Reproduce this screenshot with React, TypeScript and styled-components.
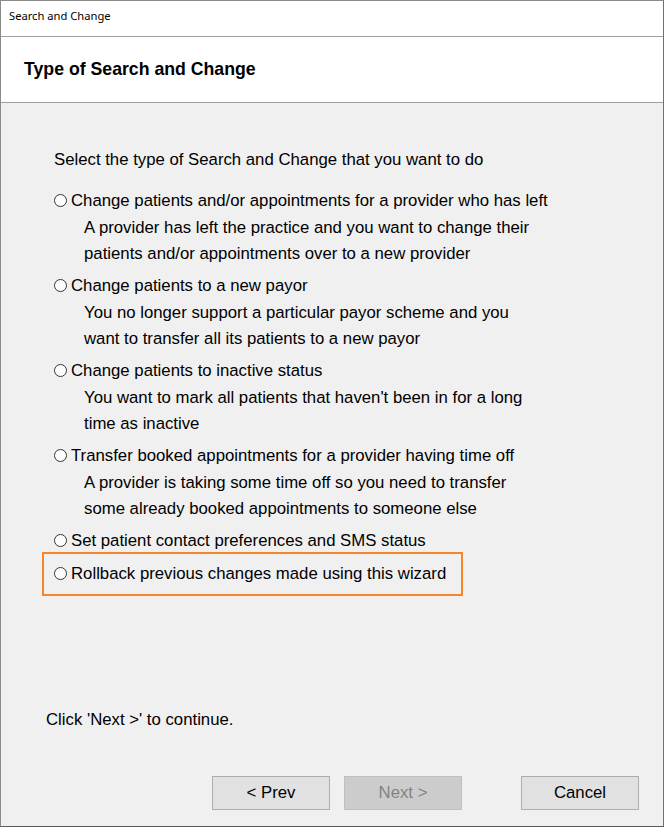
import React from "react";
import styled, { createGlobalStyle } from "styled-components";

const Global = createGlobalStyle`
  html, body { margin: 0; padding: 0; background: #ffffff; }
  * { box-sizing: border-box; }
`;

const Window = styled.div`
  width: 664px;
  height: 827px;
  display: flex;
  flex-direction: column;
  border: 1px solid #8a8a8a;
  border-right-color: #707070;
  border-bottom-color: #5a5a5a;
  background: #f0f0f0;
  font-family: "Liberation Sans", Arial, sans-serif;
  color: #000;
`;

const TitleBar = styled.div`
  height: 36px;
  background: #ffffff;
  display: flex;
  align-items: center;
  padding-left: 8px;
  padding-bottom: 6px;
  font-family: "Segoe UI", "Noto Sans", "Open Sans", sans-serif;
  font-size: 11.2px;
  color: #000;
  border-bottom: 1px solid #a0a0a0;
`;

const Header = styled.div`
  height: 66px;
  background: #ffffff;
  display: flex;
  align-items: center;
  padding-left: 23px;
  border-bottom: 1px solid #a0a0a0;
`;

const HeaderTitle = styled.h1`
  margin: 0;
  font-size: 17.7px;
  font-weight: bold;
`;

const Body = styled.div`
  flex: 1;
  display: flex;
  flex-direction: column;
  padding: 47px 0 0 53px;
  font-size: 16.75px;
`;

const Intro = styled.p`
  margin: 0 0 18px 0;
  line-height: 20px;
`;

const Options = styled.div`
  display: flex;
  flex-direction: column;
  gap: 5.5px;
`;

const Option = styled.div<{ $highlight?: boolean }>`
  display: flex;
  flex-direction: column;
  line-height: 26.5px;
  ${(p) =>
    p.$highlight
      ? `
    width: 421px;
    height: 44px;
    margin-left: -12px;
    margin-top: -8px;
    padding-left: 10px;
    justify-content: center;
    border: 2px solid #f7852a;
  `
      : ""}
`;

const Label = styled.label`
  display: flex;
  align-items: center;
  gap: 4px;
`;

const Radio = styled.span`
  width: 13px;
  height: 13px;
  border-radius: 50%;
  border: 1px solid #333333;
  background: #ffffff;
  flex: none;
  margin-top: -1px;
`;

const Desc = styled.div`
  padding-left: 30px;
`;

const Footer = styled.p`
  margin: auto 0 0 -8px;
  line-height: 20px;
`;

const ButtonRow = styled.div`
  display: flex;
  padding: 46px 24px 16px 0;
  justify-content: flex-end;
`;

const Button = styled.button<{ $gap?: number }>`
  width: 118px;
  height: 34px;
  margin-left: ${(p) => p.$gap ?? 0}px;
  font-family: "Liberation Sans", Arial, sans-serif;
  font-size: 16.75px;
  background: #e1e1e1;
  border: 1px solid #adadad;
  color: #000;
  padding: 0;
  &:disabled {
    background: #cccccc;
    border-color: #bfbfbf;
    color: #838383;
  }
`;

const options = [
  {
    label: "Change patients and/or appointments for a provider who has left",
    desc: [
      "A provider has left the practice and you want to change their",
      "patients and/or appointments over to a new provider",
    ],
  },
  {
    label: "Change patients to a new payor",
    desc: [
      "You no longer support a particular payor scheme and you",
      "want to transfer all its patients to a new payor",
    ],
  },
  {
    label: "Change patients to inactive status",
    desc: [
      "You want to mark all patients that haven't been in for a long",
      "time as inactive",
    ],
  },
  {
    label: "Transfer booked appointments for a provider having time off",
    desc: [
      "A provider is taking some time off so you need to transfer",
      "some already booked appointments to someone else",
    ],
  },
  { label: "Set patient contact preferences and SMS status", desc: [] },
];

export default function App() {
  return (
    <>
      <Global />
      <Window>
        <TitleBar>Search and Change</TitleBar>
        <Header>
          <HeaderTitle>Type of Search and Change</HeaderTitle>
        </Header>
        <Body>
          <Intro>Select the type of Search and Change that you want to do</Intro>
          <Options>
            {options.map((o) => (
              <Option key={o.label}>
                <Label>
                  <Radio />
                  {o.label}
                </Label>
                {o.desc.map((d) => (
                  <Desc key={d}>{d}</Desc>
                ))}
              </Option>
            ))}
            <Option $highlight>
              <Label>
                <Radio />
                Rollback previous changes made using this wizard
              </Label>
            </Option>
          </Options>
          <Footer>Click 'Next &gt;' to continue.</Footer>
          <ButtonRow>
            <Button>&lt; Prev</Button>
            <Button disabled $gap={14}>
              Next &gt;
            </Button>
            <Button $gap={59}>Cancel</Button>
          </ButtonRow>
        </Body>
      </Window>
    </>
  );
}
